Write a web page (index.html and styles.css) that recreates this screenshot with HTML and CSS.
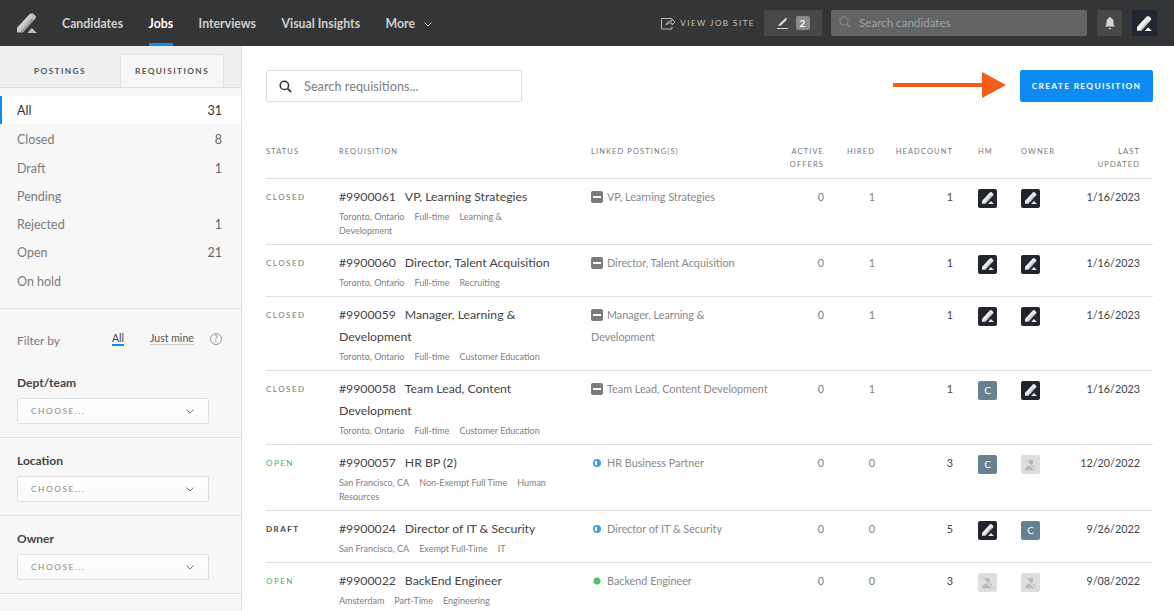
FILE: index.html
```html
<!DOCTYPE html>
<html lang="en">
<head>
    <meta charset="UTF-8">
    <title>Jobs - Requisitions</title>
    <link rel="stylesheet" href="styles.css">
</head>
<body>
    <svg class="defs" width="0" height="0">
        <symbol id="logo" viewBox="0 0 20 20">
            <path d="M0 19.500V14.800L13 .8Q14.600-.4 16.200.6L18.500 2.800Q19.600 4 18.600 5.300L6 19.500z" fill="currentColor"/>
            <path d="M0 19.500V14.800L13.200 .8 15 2.600 3.500 15.500z" fill="#fff" opacity=".28"/>
            <path d="M3 19.500 15 5.500 16.500 7 6 19.500z" fill="#000" opacity=".18"/>
            <path d="M10.300 20 14.800 15 20 20z" fill="currentColor"/>
        </symbol>
        <symbol id="nobody" viewBox="0 0 20 20">
            <circle cx="10.500" cy="6.500" r="3" fill="#b8b8b8"/>
            <path d="M3 17.500c0-3.500 3-6.500 7.500-6.500s6.500 3 6.500 6.500z" fill="#b8b8b8"/>
            <path d="M3 4.500 16 17" stroke="#e4e4e4" stroke-width="1.800"/>
            <path d="M3 2.500 12 11" stroke="#b8b8b8" stroke-width="1.200"/>
        </symbol>
        <symbol id="closed" viewBox="0 0 12 12">
            <rect width="12" height="12" rx="2" fill="#7b7b7b"/>
            <rect x="2" y="5" width="8" height="2" fill="#fff"/>
        </symbol>
        <symbol id="half" viewBox="0 0 12 12">
            <circle cx="6" cy="6" r="4" fill="#3f9df3"/>
            <path d="M6 3.800a2.200 2.200 0 0 0 0 4.400z" fill="#fff"/>
        </symbol>
        <symbol id="dot" viewBox="0 0 12 12">
            <circle cx="6" cy="6" r="3.500" fill="#46c46e"/>
        </symbol>
    </svg>

    <header class="topbar">
        <svg class="topbar-logo"><use href="#logo"/></svg>
        <nav class="nav">
            <a class="nav-link">Candidates</a>
            <a class="nav-link active">Jobs</a>
            <a class="nav-link">Interviews</a>
            <a class="nav-link">Visual Insights</a>
            <a class="nav-link">More
                <svg class="nav-caret" viewBox="0 0 8 5"><path d="M.5.5 4 4 7.500.5" fill="none" stroke="currentColor"/></svg>
            </a>
        </nav>
        <a class="job-site">
            <svg viewBox="0 0 14 13" width="14" height="13"><path d="M11 9.500V12H.5V1.500H11M5 8c.5-3 3-4 6-4V2l3 3-3 3V6C8.500 6 6.500 6.500 5 8z" fill="none" stroke="#b9b9b9"/></svg>
            View job site
        </a>
        <div class="tool-btn pencil-btn">
            <svg viewBox="0 0 12 12" width="12" height="12"><path d="M1.500 8.500 9.500 1M3 8.500l6.500-6.200M0 11.500h11" fill="none" stroke="#d8d8d8" stroke-width="1.100"/></svg>
            <span class="count">2</span>
        </div>
        <div class="top-search">
            <svg viewBox="0 0 14 14" width="12" height="12"><circle cx="5.800" cy="5.800" r="4.800" fill="none" stroke="#8a8a8a" stroke-width="1.200"/><path d="M9.500 9.500 13 13" stroke="#8a8a8a" stroke-width="1.200"/></svg>
            <span>Search candidates</span>
        </div>
        <div class="tool-btn bell-btn">
            <svg viewBox="0 0 12 13" width="12" height="13"><path d="M6 0c.6 0 1 .4 1 1 2 .5 2.500 2.500 2.500 4.500 0 2 .5 3 1.500 4H1c1-1 1.500-2 1.500-4C2.500 3.500 3 1.500 5 1c0-.6.400-1 1-1zM4.500 11h3L6 12.500z" fill="#d4d4d4"/></svg>
        </div>
        <div class="tool-btn me-btn">
            <svg width="15" height="15"><use href="#logo"/></svg>
        </div>
    </header>

    <div class="layout">
        <aside class="sidebar">
            <div class="tabs">
                <div class="tab">Postings</div>
                <div class="tab selected">Requisitions</div>
            </div>
            <ul class="status-list">
                <li class="current"><span>All</span><span class="num">31</span></li>
                <li><span>Closed</span><span class="num">8</span></li>
                <li><span>Draft</span><span class="num">1</span></li>
                <li><span>Pending</span></li>
                <li><span>Rejected</span><span class="num">1</span></li>
                <li><span>Open</span><span class="num">21</span></li>
                <li><span>On hold</span></li>
            </ul>
            <div class="filter-by">
                <span class="filter-label">Filter by</span>
                <a class="filter-all">All</a>
                <a class="filter-mine">Just mine</a>
                <span class="help">?</span>
            </div>
            <div class="filter-group first">
                <h4>Dept/team</h4>
                <div class="choose">Choose...<svg viewBox="0 0 8 5"><path d="M.5.500 4 4 7.500.5" fill="none" stroke="#777"/></svg></div>
            </div>
            <div class="filter-group">
                <h4>Location</h4>
                <div class="choose">Choose...<svg viewBox="0 0 8 5"><path d="M.5.500 4 4 7.500.5" fill="none" stroke="#777"/></svg></div>
            </div>
            <div class="filter-group">
                <h4>Owner</h4>
                <div class="choose">Choose...<svg viewBox="0 0 8 5"><path d="M.5.500 4 4 7.500.5" fill="none" stroke="#777"/></svg></div>
            </div>
        </aside>

        <main class="content">
            <div class="toolbar">
                <div class="req-search">
                    <svg viewBox="0 0 14 14" width="13" height="13"><circle cx="5.800" cy="5.800" r="4.500" fill="none" stroke="#333" stroke-width="1.600"/><path d="M9.300 9.300 13 13" stroke="#333" stroke-width="1.800"/></svg>
                    <span>Search requisitions...</span>
                </div>
                <svg class="arrow" viewBox="0 0 113 26" width="113" height="26"><path d="M0 11h89V0l24 13-24 13V15H0z" fill="#f45d1a"/></svg>
                <a class="create-btn">Create requisition</a>
            </div>

            <table class="reqs">
                <thead>
                    <tr>
                        <th class="c-status">Status</th>
                        <th class="c-req">Requisition</th>
                        <th class="c-linked">Linked posting(s)</th>
                        <th class="c-offers r">Active<br>offers</th>
                        <th class="c-hired r">Hired</th>
                        <th class="c-head r">Headcount</th>
                        <th class="c-hm">HM</th>
                        <th class="c-owner">Owner</th>
                        <th class="c-date r">Last<br>updated</th>
                    </tr>
                </thead>
                <tbody>
                    <tr class="h66">
                        <td class="state">Closed</td>
                        <td><div class="title"><b>#9900061</b>VP, Learning Strategies</div>
                            <div class="meta"><span>Toronto, Ontario</span><span>Full-time</span><span>Learning &amp; Development</span></div></td>
                        <td class="linked"><svg><use href="#closed"/></svg>VP, Learning Strategies</td>
                        <td class="n r">0</td><td class="n r">1</td><td class="r dark">1</td>
                        <td><div class="av me"><svg><use href="#logo"/></svg></div></td>
                        <td><div class="av me"><svg><use href="#logo"/></svg></div></td>
                        <td class="r dark">1/16/2023</td>
                    </tr>
                    <tr class="h52">
                        <td class="state">Closed</td>
                        <td><div class="title"><b>#9900060</b>Director, Talent Acquisition</div>
                            <div class="meta"><span>Toronto, Ontario</span><span>Full-time</span><span>Recruiting</span></div></td>
                        <td class="linked"><svg><use href="#closed"/></svg>Director, Talent Acquisition</td>
                        <td class="n r">0</td><td class="n r">1</td><td class="r dark">1</td>
                        <td><div class="av me"><svg><use href="#logo"/></svg></div></td>
                        <td><div class="av me"><svg><use href="#logo"/></svg></div></td>
                        <td class="r dark">1/16/2023</td>
                    </tr>
                    <tr class="h74">
                        <td class="state">Closed</td>
                        <td><div class="title"><b>#9900059</b>Manager, Learning &amp;<br>Development</div>
                            <div class="meta"><span>Toronto, Ontario</span><span>Full-time</span><span>Customer Education</span></div></td>
                        <td class="linked"><svg><use href="#closed"/></svg>Manager, Learning &amp;<br>Development</td>
                        <td class="n r">0</td><td class="n r">1</td><td class="r dark">1</td>
                        <td><div class="av me"><svg><use href="#logo"/></svg></div></td>
                        <td><div class="av me"><svg><use href="#logo"/></svg></div></td>
                        <td class="r dark">1/16/2023</td>
                    </tr>
                    <tr class="h74">
                        <td class="state">Closed</td>
                        <td><div class="title"><b>#9900058</b>Team Lead, Content<br>Development</div>
                            <div class="meta"><span>Toronto, Ontario</span><span>Full-time</span><span>Customer Education</span></div></td>
                        <td class="linked"><svg><use href="#closed"/></svg>Team Lead, Content Development</td>
                        <td class="n r">0</td><td class="n r">1</td><td class="r dark">1</td>
                        <td><div class="av letter">C</div></td>
                        <td><div class="av me"><svg><use href="#logo"/></svg></div></td>
                        <td class="r dark">1/16/2023</td>
                    </tr>
                    <tr class="h66">
                        <td class="state open">Open</td>
                        <td><div class="title"><b>#9900057</b>HR BP (2)</div>
                            <div class="meta"><span>San Francisco, CA</span><span>Non-Exempt Full Time</span><span>Human Resources</span></div></td>
                        <td class="linked"><svg><use href="#half"/></svg>HR Business Partner</td>
                        <td class="n r">0</td><td class="n r">0</td><td class="r dark">3</td>
                        <td><div class="av letter">C</div></td>
                        <td><div class="av none"><svg><use href="#nobody"/></svg></div></td>
                        <td class="r dark">12/20/2022</td>
                    </tr>
                    <tr class="h52">
                        <td class="state draft">Draft</td>
                        <td><div class="title"><b>#9900024</b>Director of IT &amp; Security</div>
                            <div class="meta"><span>San Francisco, CA</span><span>Exempt Full-Time</span><span>IT</span></div></td>
                        <td class="linked"><svg><use href="#half"/></svg>Director of IT &amp; Security</td>
                        <td class="n r">0</td><td class="n r">0</td><td class="r dark">5</td>
                        <td><div class="av me"><svg><use href="#logo"/></svg></div></td>
                        <td><div class="av letter">C</div></td>
                        <td class="r dark">9/26/2022</td>
                    </tr>
                    <tr class="h52">
                        <td class="state open">Open</td>
                        <td><div class="title"><b>#9900022</b>BackEnd Engineer</div>
                            <div class="meta"><span>Amsterdam</span><span>Part-Time</span><span>Engineering</span></div></td>
                        <td class="linked"><svg><use href="#dot"/></svg>Backend Engineer</td>
                        <td class="n r">0</td><td class="n r">0</td><td class="r dark">3</td>
                        <td><div class="av none"><svg><use href="#nobody"/></svg></div></td>
                        <td><div class="av none"><svg><use href="#nobody"/></svg></div></td>
                        <td class="r dark">9/08/2022</td>
                    </tr>
                </tbody>
            </table>
        </main>
    </div>
</body>
</html>
```

FILE: styles.css
```css
* {
    box-sizing: border-box;
}
html, body {
    margin: 0;
    padding: 0;
    height: 611px;
    overflow: hidden;
    background: #fff;
    font-family: "Lato", sans-serif;
    color: #444;
}
.defs {
    position: absolute;
}

/* top bar */
.topbar {
    height: 46px;
    background: #343537;
    display: flex;
    align-items: center;
    padding-left: 17px;
    color: #ddd;
}
.topbar-logo {
    width: 20px;
    height: 20px;
    color: #bdbdbd;
}
.nav {
    display: flex;
    height: 46px;
    margin-left: 25px;
    gap: 25.500px;
}
.nav-link {
    display: flex;
    align-items: center;
    gap: 9px;
    font-size: 12.300px;
    font-weight: 700;
    color: #cfcfcf;
    border-bottom: 3px solid transparent;
    padding-top: 3px;
}
.nav-link.active {
    color: #fff;
    border-bottom-color: #0d8bf2;
}
.nav-caret {
    width: 8px;
    height: 5px;
    margin-top: 2px;
}
.job-site {
    margin-left: auto;
    display: flex;
    align-items: center;
    gap: 5px;
    font-size: 8px;
    letter-spacing: 1.500px;
    text-transform: uppercase;
    color: #c4c4c4;
}
.tool-btn {
    height: 26px;
    background: #47484a;
    border-radius: 2px;
    display: flex;
    align-items: center;
    justify-content: center;
}
.pencil-btn {
    width: 58px;
    margin-left: 9px;
    gap: 7px;
}
.count {
    width: 14px;
    height: 14px;
    background: #8a8a8a;
    border-radius: 2px;
    color: #fff;
    font-size: 10px;
    font-weight: 700;
    text-align: center;
    line-height: 14px;
}
.top-search {
    width: 256px;
    height: 26px;
    margin-left: 9px;
    padding: 0 0 2px 8px;
    background: #636466;
    border-radius: 2px;
    display: flex;
    align-items: center;
    gap: 8px;
    font-size: 11.600px;
    color: #a2a2a2;
}
.bell-btn {
    width: 25px;
    margin-left: 10px;
}
.me-btn {
    width: 25px;
    margin-left: 10px;
    margin-right: 17px;
    background: #23252e;
    color: #eee;
}

.layout {
    display: flex;
    height: 565px;
}

/* sidebar */
.sidebar {
    width: 242px;
    flex: none;
    background: #f7f7f7;
    border-right: 1px solid #e2e2e2;
}
.tabs {
    display: flex;
    height: 42px;
    padding-top: 8px;
    padding-right: 17px;
    background: #eeeff0;
    border-bottom: 1px solid #dedede;
}
.tab {
    flex: 1;
    font-size: 8.300px;
    letter-spacing: 1.400px;
    text-transform: uppercase;
    text-align: center;
    line-height: 34px;
    color: #555;
    font-weight: 700;
}
.tab.selected {
    flex: none;
    width: 104px;
    background: #f7f7f7;
    border: 1px solid #e2e2e2;
    border-bottom: 0;
    border-radius: 2px 2px 0 0;
    line-height: 32px;
}
.status-list {
    list-style: none;
    margin: 8px 0 0;
    padding: 0 19px 13px 0;
    border-bottom: 1px solid #e2e2e2;
    width: 241px;
    height: 213px;
}
.status-list li {
    display: flex;
    justify-content: space-between;
    height: 28.300px;
    line-height: 28px;
    padding-top: 2px;
    padding-left: 17px;
    font-size: 12.500px;
    color: #7b7b7b;
}
.status-list li.current {
    background: #fff;
    color: #333;
    border-left: 2px solid #0d8bf2;
    padding-top: 1px;
    padding-left: 15px;
    margin-right: -19px;
    padding-right: 19px;
}
.num {
    color: #666;
}
.current .num {
    color: #333;
}
.filter-by {
    height: 57px;
    display: flex;
    align-items: center;
    padding: 6px 19px 0 17px;
    font-size: 11px;
}
.filter-label {
    font-size: 12px;
    color: #7b7b7b;
}
.filter-all {
    margin-left: 52px;
    color: #444;
    font-size: 10.500px;
    border-bottom: 2px solid #0d8bf2;
    margin-top: -4px;
}
.filter-mine {
    margin-left: 26px;
    color: #555;
    font-size: 10.500px;
    border-bottom: 1px solid #ccc;
    margin-top: -4px;
}
.help {
    margin-left: auto;
    width: 12px;
    height: 12px;
    border: 1px solid #999;
    border-radius: 50%;
    font-size: 8.500px;
    line-height: 11px;
    text-align: center;
    color: #888;
    margin-top: -4px;
}
.filter-group {
    height: 78px;
    padding: 15px 32px 0 17px;
    border-bottom: 1px solid #e2e2e2;
}
.filter-group.first {
    height: 72px;
    padding-top: 9px;
}
.filter-group h4 {
    margin: 0;
    font-size: 12px;
    font-weight: 700;
    color: #444;
    line-height: 16px;
}
.choose {
    margin-top: 7px;
    height: 26px;
    background: linear-gradient(#fff, #fafafa);
    border: 1px solid #e0e0e0;
    border-radius: 2px;
    display: flex;
    align-items: center;
    justify-content: space-between;
    padding: 0 14px 0 13px;
    font-size: 8.400px;
    letter-spacing: 1.500px;
    text-transform: uppercase;
    color: #888;
}
.choose svg {
    width: 8px;
    height: 5px;
}

/* main */
.content {
    flex: 1;
    padding: 24px 21px 0 24px;
    min-width: 0;
}
.toolbar {
    display: flex;
    align-items: center;
    height: 32px;
    margin-bottom: 33px;
}
.req-search {
    width: 256px;
    height: 32px;
    border: 1px solid #e0e0e0;
    border-radius: 2px;
    display: flex;
    align-items: center;
    gap: 12px;
    padding-left: 12px;
    font-size: 12.750px;
    color: #808080;
}
.arrow {
    margin-left: auto;
    margin-right: 14px;
    margin-top: -3px;
}
.create-btn {
    width: 133px;
    height: 32px;
    background: #0d8bf2;
    border-radius: 2px;
    color: #fff;
    font-size: 8.400px;
    font-weight: 700;
    letter-spacing: 1.300px;
    text-transform: uppercase;
    text-align: center;
    line-height: 32px;
}

/* table */
.reqs {
    width: 887px;
    border-collapse: collapse;
    table-layout: fixed;
}
.reqs th {
    font-size: 7.500px;
    font-weight: 400;
    letter-spacing: 1.100px;
    line-height: 13px;
    text-transform: uppercase;
    text-align: left;
    color: #777;
    height: 43px;
    vertical-align: top;
    padding: 10px 0 0;
    border-bottom: 1px solid #e0e0e0;
}
.reqs th.r, .reqs td.r {
    text-align: right;
}
.c-status { width: 73px; }
.c-req { width: 252px; }
.c-linked { width: 187px; }
.c-offers { width: 46px; }
.c-hired { width: 51px; }
.c-head { width: 78px; }
.c-hm { width: 68px; padding-left: 25px !important; }
.c-owner { width: 43px; }
.reqs th.c-date, .reqs td:last-child {
    padding-right: 13px;
}
.reqs td {
    vertical-align: top;
    padding: 10px 0 0;
    font-size: 10.800px;
    line-height: 16px;
    border-bottom: 1px solid #e0e0e0;
}
tr.h66 td { height: 66px; }
tr.h52 td { height: 52px; }
tr.h74 td { height: 74px; }
.reqs td.state {
    font-size: 8px;
    letter-spacing: 1.500px;
    text-transform: uppercase;
    color: #777;
}
.reqs td.open {
    color: #2bb673;
}
.reqs td.draft {
    color: #444;
    font-weight: 700;
}
.title {
    font-size: 12.250px;
    line-height: 22px;
    margin-top: -3px;
    color: #444;
}
.title b {
    font-weight: 400;
    margin-right: 9px;
}
.meta {
    font-size: 9px;
    line-height: 14px;
    margin-top: 2px;
    color: #808080;
    padding-right: 35px;
}
.meta span {
    margin-right: 10px;
}
.reqs td.linked {
    font-size: 10.800px;
    line-height: 22px;
    padding-top: 7px;
    color: #888;
}
.linked svg {
    width: 12px;
    height: 12px;
    margin-right: 4px;
    vertical-align: -2px;
}
.n {
    color: #808080;
}
.dark {
    color: #444;
}
.av {
    width: 19px;
    height: 19px;
    border-radius: 2px;
    display: flex;
    align-items: center;
    justify-content: center;
}
tr td:nth-child(7) .av {
    margin-left: 25px;
}
.av svg {
    width: 12px;
    height: 12px;
}
.av.none svg {
    width: 15px;
    height: 15px;
}
.av.me {
    background: #23252e;
    color: #e8e8e8;
}
.av.letter {
    background: #66818f;
    color: #fff;
    font-size: 10px;
}
.av.none {
    background: #dedede;
}
```
